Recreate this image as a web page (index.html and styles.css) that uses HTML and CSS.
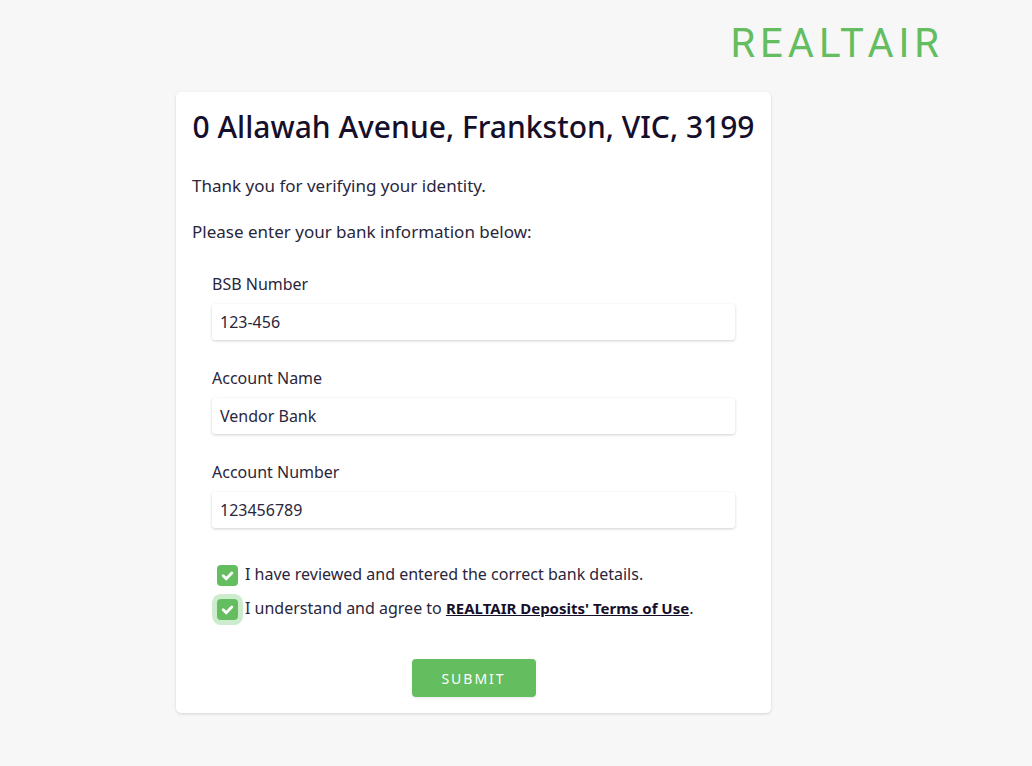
FILE: index.html
```html
<!DOCTYPE html>
<html lang="en">
<head>
<meta charset="utf-8">
<meta name="viewport" content="width=device-width, initial-scale=1">
<title>Realtair Deposits</title>
<link rel="stylesheet" href="styles.css">
</head>
<body>
<div class="page">
  <header class="header"><span class="logo">REALTAIR</span></header>
  <main class="card">
    <h1 class="title">0 Allawah Avenue, Frankston, VIC, 3199</h1>
    <p class="intro">Thank you for verifying your identity.</p>
    <p class="intro">Please enter your bank information below:</p>
    <form class="form">
      <div class="field">
        <label class="label" for="bsb">BSB Number</label>
        <input class="input" id="bsb" type="text" value="123-456">
      </div>
      <div class="field">
        <label class="label" for="name">Account Name</label>
        <input class="input" id="name" type="text" value="Vendor Bank">
      </div>
      <div class="field">
        <label class="label" for="number">Account Number</label>
        <input class="input" id="number" type="text" value="123456789">
      </div>
      <div class="checks">
        <div class="check">
          <span class="tick"><input class="box" id="reviewed" type="checkbox" checked><svg class="mark" viewBox="0 0 12 12" aria-hidden="true"><path d="M2 6.2 4.8 9 10 3.6"/></svg></span>
          <label class="check-label" for="reviewed">I have reviewed and entered the correct bank details.</label>
        </div>
        <div class="check">
          <span class="tick"><input class="box box-focused" id="agree" type="checkbox" checked><svg class="mark" viewBox="0 0 12 12" aria-hidden="true"><path d="M2 6.2 4.8 9 10 3.6"/></svg></span>
          <label class="check-label" for="agree">I understand and agree to <a class="link" href="#">REALTAIR Deposits' Terms of Use</a>.</label>
        </div>
      </div>
      <button class="submit" type="submit">SUBMIT</button>
    </form>
  </main>
</div>
</body>
</html>
```
FILE: styles.css
```css
* { box-sizing: border-box; }
body {
  margin: 0;
  background: #f7f7f7;
  color: #2a263c;
  font-family: "Noto Sans", sans-serif;
  font-size: 16px;
  line-height: 20px;
}
.page {
  display: grid;
  grid-template-columns: 176fr minmax(0, 595fr) 261fr;
  padding-bottom: 52px;
}
.header {
  grid-column: 1 / -1;
  display: flex;
  justify-content: flex-end;
  padding: 19px 88px 23px 16px;
}
.logo {
  color: #64bd5f;
  font-family: Roboto, sans-serif;
  font-size: 40px;
  line-height: 50px;
  letter-spacing: 5px;
}
.card {
  grid-column: 2;
  padding: 16px;
  background: #fff;
  border-radius: 5px;
  box-shadow: 0 1px 3px rgba(28, 24, 60, 0.16);
}
.title {
  margin: 0 0 28px;
  color: #160f2b;
  font-size: 30px;
  font-weight: 500;
  line-height: 38px;
  text-align: center;
}
.intro {
  margin: 0 0 22px;
  font-size: 17px;
  line-height: 24px;
}
.form {
  display: flex;
  flex-direction: column;
  padding: 8px 20px 0;
}
.field {
  display: flex;
  flex-direction: column;
  gap: 10px;
  margin-bottom: 28px;
}
.input {
  width: 100%;
  height: 36px;
  padding: 0 8px;
  border: 0;
  border-radius: 3px;
  background: #fff;
  color: inherit;
  font: inherit;
  box-shadow: 0 1px 3px rgba(28, 24, 60, 0.2);
}
.checks {
  display: grid;
  gap: 13px;
  margin-top: 9px;
  padding-left: 5px;
}
.check {
  display: flex;
  gap: 7px;
}
.tick {
  display: grid;
  flex: none;
  width: 21px;
  height: 21px;
}
.box, .mark { grid-area: 1 / 1; }
.box {
  appearance: none;
  width: 21px;
  height: 21px;
  margin: 0;
  border-radius: 4px;
  background: #64bd5f;
}
.box-focused { box-shadow: 0 0 0 5px #cdebcd; }
.mark {
  place-self: center;
  width: 13px;
  height: 13px;
  fill: none;
  stroke: #fff;
  stroke-width: 2.6;
  stroke-linecap: round;
  pointer-events: none;
}
.check-label { line-height: 18px; }
.link {
  color: #160f2b;
  font-size: 15px;
  font-weight: 700;
}
.submit {
  align-self: center;
  width: 124px;
  height: 38px;
  margin-top: 39px;
  border: 0;
  border-radius: 4px;
  background: #64bd5f;
  color: #fff;
  font-family: inherit;
  font-size: 14px;
  letter-spacing: 2px;
  box-shadow: 0 1px 3px rgba(28, 24, 60, 0.1);
}
```
